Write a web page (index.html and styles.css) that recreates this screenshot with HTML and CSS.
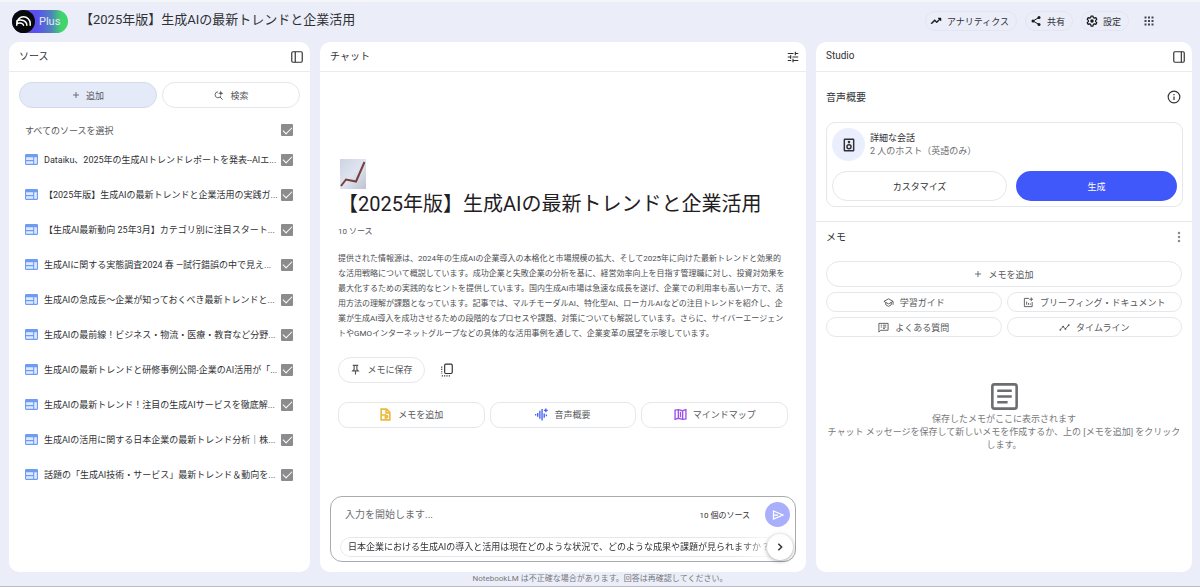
FILE: index.html
```html
<!DOCTYPE html>
<html lang="ja">
<head>
    <meta charset="UTF-8">
    <meta name="viewport" content="width=device-width, initial-scale=1.0">
    <title>NotebookLM</title>
    <link rel="stylesheet" href="styles.css">
</head>
<body>
    <!-- Shared icons -->
    <svg class="icon-defs" aria-hidden="true">
        <symbol id="plus" viewBox="0 0 24 24"><path d="M12 3v18M3 12h18" fill="none" stroke="currentColor" stroke-width="2.500"/></symbol>
        <symbol id="web" viewBox="0 0 24 20"><rect width="24" height="20" rx="2" fill="#6f9cf3"/><path d="M2 6h13v5H2zM2 13h13v5H2zM17 6h5v12h-5z" fill="#dfe9fe"/></symbol>
    </svg>

    <header class="topbar">
        <div class="brand">
            <svg class="logo" viewBox="0 0 24 24" fill="none" stroke="#fff" stroke-width="1.6" stroke-linecap="round">
                <circle cx="12" cy="12" r="12" fill="#08090b" stroke="none"/>
                <path d="M5 16v-2a7 7 0 0 1 14 0v2M5 11.500c4-2.500 10.500-.5 10.500 4.500M5 14.200c3.500-1.600 7-.2 7 1.800"/>
            </svg>
            <span>Plus</span>
        </div>
        <h1>【2025年版】生成AIの最新トレンドと企業活用</h1>
        <nav class="top-actions">
            <button class="top-btn">
                <svg viewBox="0 0 24 24"><path fill="currentColor" stroke="currentColor" d="M16 6l2.290 2.290-4.880 4.880-4-4L2 16.590 3.410 18l6-6 4 4 6.300-6.290L22 12V6z"/></svg>
                アナリティクス
            </button>
            <button class="top-btn">
                <svg viewBox="0 0 24 24"><path fill="none" stroke="currentColor" stroke-width="2" d="M18 5L6 12l12 7"/><g fill="currentColor"><circle cx="18" cy="5" r="3"/><circle cx="6" cy="12" r="3"/><circle cx="18" cy="19" r="3"/></g></svg>
                共有
            </button>
            <button class="top-btn">
                <svg viewBox="0 0 24 24"><path fill="none" stroke="currentColor" stroke-width="2.500" stroke-linejoin="round" d="M10 2h4l.6 3 2 1.200 3-1 2 3.500-2.300 2v2.600l2.300 2-2 3.500-3-1-2 1.200-.6 3h-4l-.6-3-2-1.200-3 1-2-3.500 2.300-2v-2.600l-2.300-2 2-3.500 3 1 2-1.200z"/><circle cx="12" cy="12" r="3.500" fill="currentColor"/></svg>
                設定
            </button>
            <button class="apps-btn" aria-label="アプリ">
                <svg viewBox="0 0 24 24" fill="currentColor"><path d="M3 3h4v4H3zM10 3h4v4h-4zM17 3h4v4h-4zM3 10h4v4H3zM10 10h4v4h-4zM17 10h4v4h-4zM3 17h4v4H3zM10 17h4v4h-4zM17 17h4v4h-4z"/></svg>
            </button>
        </nav>
    </header>

    <main class="panels">
        <section class="panel">
            <div class="panel-header">
                <h2>ソース</h2>
                <button class="icon-btn" aria-label="ソースを閉じる">
                    <svg viewBox="0 0 24 24" fill="none" stroke="currentColor" stroke-width="2"><rect x="3" y="3" width="18" height="18" rx="2"/><path d="M9 3v18"/></svg>
                </button>
            </div>
            <div class="source-actions">
                <button class="pill pill-tinted"><svg class="small"><use href="#plus"/></svg>追加</button>
                <button class="pill">
                    <svg viewBox="0 0 24 24" fill="none" stroke="currentColor" stroke-width="2"><path d="M11 4a6.500 6.500 0 1 0 6 9M15 15l6 6"/><path fill="currentColor" stroke="none" d="M17 1l1.500 4.500L23 7l-4.500 1.500L17 13l-1.500-4.500L11 7l4.500-1.500z"/></svg>
                    検索
                </button>
            </div>
            <div class="source-list">
                <label class="select-all"><span>すべてのソースを選択</span><input type="checkbox" checked></label>
                <label class="source"><svg><use href="#web"/></svg><span>Dataiku、2025年の生成AIトレンドレポートを発表--AIエ...</span><input type="checkbox" checked></label>
                <label class="source"><svg><use href="#web"/></svg><span>【2025年版】生成AIの最新トレンドと企業活用の実践ガ...</span><input type="checkbox" checked></label>
                <label class="source"><svg><use href="#web"/></svg><span>【生成AI最新動向 25年3月】カテゴリ別に注目スタート...</span><input type="checkbox" checked></label>
                <label class="source"><svg><use href="#web"/></svg><span>生成AIに関する実態調査2024 春 ―試行錯誤の中で見え...</span><input type="checkbox" checked></label>
                <label class="source"><svg><use href="#web"/></svg><span>生成AIの急成長～企業が知っておくべき最新トレンドと...</span><input type="checkbox" checked></label>
                <label class="source"><svg><use href="#web"/></svg><span>生成AIの最前線！ビジネス・物流・医療・教育など分野...</span><input type="checkbox" checked></label>
                <label class="source"><svg><use href="#web"/></svg><span>生成AIの最新トレンドと研修事例公開-企業のAI活用が「...</span><input type="checkbox" checked></label>
                <label class="source"><svg><use href="#web"/></svg><span>生成AIの最新トレンド！注目の生成AIサービスを徹底解...</span><input type="checkbox" checked></label>
                <label class="source"><svg><use href="#web"/></svg><span>生成AIの活用に関する日本企業の最新トレンド分析｜株...</span><input type="checkbox" checked></label>
                <label class="source"><svg><use href="#web"/></svg><span>話題の「生成AI技術・サービス」最新トレンド＆動向を...</span><input type="checkbox" checked></label>
            </div>
        </section>

        <section class="panel">
            <div class="panel-header">
                <h2>チャット</h2>
                <button class="icon-btn" aria-label="チャットの設定">
                    <svg viewBox="0 0 24 24"><path fill="currentColor" d="M3 17v2h6v-2H3zM3 5v2h10V5H3zm10 16v-2h8v-2h-8v-2h-2v6h2zM7 9v2H3v2h4v2h2V9H7zm14 4v-2H11v2h10zm-6-4h2V7h4V5h-4V3h-2v6z"/></svg>
                </button>
            </div>
            <div class="overview">
                <svg class="emoji" viewBox="0 0 26 30">
                    <defs><linearGradient id="paper" x1="0" y1="0" x2="1" y2="1"><stop offset="0" stop-color="#ccd4e2"/><stop offset=".5" stop-color="#dfe4ef"/><stop offset="1" stop-color="#bdc3cf"/></linearGradient></defs>
                    <rect width="26" height="30" fill="url(#paper)"/>
                    <path d="M1 27l5-6.500 10 2L24.500 3" fill="none" stroke="#73423f" stroke-width="2"/>
                </svg>
                <h2 class="overview-title">【2025年版】生成AIの最新トレンドと企業活用</h2>
                <p class="source-count">10 ソース</p>
                <p class="summary">提供された情報源は、2024年の生成AIの企業導入の本格化と市場規模の拡大、そして2025年に向けた最新トレンドと効果的な活用戦略について概説しています。成功企業と失敗企業の分析を基に、経営効率向上を目指す管理職に対し、投資対効果を最大化するための実践的なヒントを提供しています。国内生成AI市場は急速な成長を遂げ、企業での利用率も高い一方で、活用方法の理解が課題となっています。記事では、マルチモーダルAI、特化型AI、ローカルAIなどの注目トレンドを紹介し、企業が生成AI導入を成功させるための段階的なプロセスや課題、対策についても解説しています。さらに、サイバーエージェントやGMOインターネットグループなどの具体的な活用事例を通して、企業変革の展望を示唆しています。</p>
                <div class="save-row">
                    <button class="pill save-btn">
                        <svg viewBox="0 0 24 24" fill="none" stroke="currentColor" stroke-width="2.500"><path d="M6 3h12M9 3v9l-3 3h12l-3-3V3M12 15v8"/></svg>
                        メモに保存
                    </button>
                    <button class="icon-btn" aria-label="コピー">
                        <svg viewBox="0 0 24 24" fill="none" stroke="currentColor" stroke-width="2"><rect x="8" y="2" width="13" height="16" rx="2"/><path d="M3 6v13M3 22h15" stroke-dasharray="2 2"/></svg>
                    </button>
                </div>
                <div class="chips">
                    <button class="pill">
                        <svg viewBox="0 0 24 24" fill="none" stroke="#edb83f" stroke-width="3"><path d="M4 2h10l6 6v14H4zM13 2v7h7M4 13h8v9"/><circle cx="14" cy="16" r="2"/></svg>
                        メモを追加
                    </button>
                    <button class="pill">
                        <svg viewBox="0 0 24 24" fill="none" stroke="#4361ee" stroke-width="2.500"><path d="M1 11v3M5 9v7M9 5v15M13 2v21M17 10v8M21 12v3M20 1v7M16.500 4.500h7"/></svg>
                        音声概要
                    </button>
                    <button class="pill">
                        <svg viewBox="0 0 24 24" fill="none" stroke="#9b51e8" stroke-width="2.500"><path d="M2 4l6-1 8 2 6-2v17l-6 1-8-2-6 2zM8 3v16M16 5v16M12 7v10"/></svg>
                        マインドマップ
                    </button>
                </div>
            </div>
            <form class="composer">
                <div class="composer-row">
                    <input type="text" aria-label="質問" placeholder="入力を開始します...">
                    <span class="composer-count">10 個のソース</span>
                    <button type="button" class="send-btn" aria-label="送信">
                        <svg viewBox="0 0 24 24" fill="none" stroke="#fff" stroke-width="2.500"><path d="M3 4l19 8-19 8zM3 12h9"/></svg>
                    </button>
                </div>
                <div class="suggestions">
                    <button type="button" class="suggestion">日本企業における生成AIの導入と活用は現在どのような状況で、どのような成果や課題が見られますか？</button>
                    <button type="button" class="next-btn" aria-label="次へ">
                        <svg viewBox="0 0 24 24" fill="none" stroke="currentColor" stroke-width="3.500"><path d="M8 4l8 8-8 8"/></svg>
                    </button>
                </div>
            </form>
        </section>

        <section class="panel">
            <div class="panel-header">
                <h2>Studio</h2>
                <button class="icon-btn" aria-label="Studioを閉じる">
                    <svg viewBox="0 0 24 24" fill="none" stroke="currentColor" stroke-width="2"><rect x="3" y="3" width="18" height="18" rx="2"/><path d="M16 3v18"/></svg>
                </button>
            </div>
            <div class="audio">
                <div class="section-title">
                    <h3>音声概要</h3>
                    <button class="icon-btn" aria-label="情報">
                        <svg viewBox="0 0 24 24" fill="none" stroke="currentColor" stroke-width="2"><circle cx="12" cy="12" r="10"/><path d="M12 11v6M12 7v2"/></svg>
                    </button>
                </div>
                <div class="audio-card">
                    <div class="audio-info">
                        <span class="speaker">
                            <svg viewBox="0 0 24 24" fill="none" stroke="currentColor" stroke-width="2.500"><rect x="4" y="2" width="16" height="20" rx="1"/><circle cx="12" cy="15" r="3.500"/><circle cx="12" cy="7" r="1"/></svg>
                        </span>
                        <div>
                            <p class="audio-name">詳細な会話</p>
                            <p class="audio-hosts">2 人のホスト（英語のみ）</p>
                        </div>
                    </div>
                    <div class="audio-actions">
                        <button class="pill">カスタマイズ</button>
                        <button class="pill pill-primary">生成</button>
                    </div>
                </div>
            </div>
            <div class="notes">
                <div class="section-title">
                    <h3>メモ</h3>
                    <button class="icon-btn more" aria-label="その他">
                        <svg viewBox="0 0 24 24" fill="currentColor"><circle cx="12" cy="4" r="2.500"/><circle cx="12" cy="12" r="2.500"/><circle cx="12" cy="20" r="2.500"/></svg>
                    </button>
                </div>
                <div class="note-buttons">
                    <button class="pill add-note"><svg class="small"><use href="#plus"/></svg>メモを追加</button>
                    <button class="pill">
                        <svg viewBox="0 0 24 24" fill="none" stroke="currentColor" stroke-width="2"><path d="M12 4l10 5.500-10 5.500L2 9.500zM6 12v5l6 3.500 6-3.500v-5M22 10v7"/></svg>
                        学習ガイド
                    </button>
                    <button class="pill">
                        <svg viewBox="0 0 24 24" fill="none" stroke="currentColor" stroke-width="2"><path d="M13 3H3v18h17V11M8 10v7M12 13v4M16 14v3M18 1v8M14 5h8"/></svg>
                        ブリーフィング・ドキュメント
                    </button>
                    <button class="pill">
                        <svg viewBox="0 0 24 24" fill="none" stroke="currentColor" stroke-width="2"><path d="M2 3h20v15H6l-4 4zM6 7h3M11 7h7M6 11h3M11 11h7M11 14h4"/></svg>
                        よくある質問
                    </button>
                    <button class="pill">
                        <svg viewBox="0 0 24 24" fill="none" stroke="currentColor" stroke-width="2"><path d="M2 17l7-7 5 5 8-9"/><g fill="currentColor" stroke="none"><circle cx="3" cy="17" r="2"/><circle cx="9" cy="10" r="2"/><circle cx="14" cy="15" r="2"/><circle cx="21" cy="7" r="2"/></g></svg>
                        タイムライン
                    </button>
                </div>
                <div class="empty">
                    <svg viewBox="0 0 26 26" fill="none" stroke="currentColor" stroke-width="2.500"><rect x="1.300" y="1.300" width="23.400" height="23.400" rx="2"/><path d="M6 7.500h14M6 13h14M6 18.500h10"/></svg>
                    <p>保存したメモがここに表示されます</p>
                    <p>チャット メッセージを保存して新しいメモを作成するか、上の [メモを追加] をクリックします。</p>
                </div>
            </div>
        </section>
    </main>

    <footer class="footer">NotebookLM は不正確な場合があります。回答は再確認してください。</footer>
</body>
</html>
```

FILE: styles.css
```css
* {
    box-sizing: border-box;
}
body {
    margin: 0;
    min-height: 100vh;
    display: flex;
    flex-direction: column;
    background-color: #ebeef9;
    border-top: 2px solid #f4f5f6;
    border-bottom: 1px solid #b9bbc0;
    color: #303134;
    font-family: Roboto, "Noto Sans CJK JP", sans-serif;
    font-size: 9px;
}
h1, h2, h3, p {
    margin: 0;
    font-weight: 400;
}
button, input {
    font: inherit;
    color: inherit;
}
button {
    display: flex;
    align-items: center;
    justify-content: center;
    padding: 0;
    border: none;
    background: none;
    cursor: pointer;
    white-space: nowrap;
}
svg {
    width: 12px;
    height: 12px;
    flex-shrink: 0;
}
.icon-defs {
    position: absolute;
    width: 0;
    height: 0;
}

/* Top bar */
.topbar {
    display: flex;
    align-items: center;
    height: 40px;
    padding: 0 45px 2px 12px;
}
.brand {
    display: flex;
    align-items: center;
    gap: 4px;
    width: 56px;
    height: 23px;
    margin-right: 12px;
    border-radius: 12px;
    background: linear-gradient(90deg, #5b50ee 45%, #4e83ba 70%, #3fd56c 88%);
    color: #e4e9fb;
    font-size: 11px;
}
.brand .logo {
    width: 23px;
    height: 23px;
}
.topbar h1 {
    font-size: 13px;
    line-height: 18px;
    padding-bottom: 2px;
}
.top-actions {
    display: flex;
    align-items: center;
    gap: 8px;
    margin-left: auto;
}
.top-btn {
    gap: 5px;
    height: 20px;
    padding: 0 7px 0 4px;
    border: 1px solid #e3e6f2;
    border-radius: 10px;
}
.top-btn svg {
    color: #18191b;
}
.apps-btn {
    margin-left: 6px;
    color: #444649;
}

/* Panels */
.panels {
    flex: 1;
    display: grid;
    grid-template-columns: 301fr 486fr 376fr;
    gap: 10px;
    padding: 0 8px 0 9px;
}
.panel {
    display: flex;
    flex-direction: column;
    min-width: 0;
    border-radius: 10px;
    background-color: white;
}
.panel-header {
    display: flex;
    align-items: center;
    justify-content: space-between;
    height: 30px;
    padding: 0 6px 0 10px;
    border-bottom: 1px solid #eaebed;
}
.panel-header h2,
.section-title h3 {
    padding-bottom: 2px;
    font-size: 10px;
}
.icon-btn svg {
    width: 14px;
    height: 14px;
}
.pill {
    gap: 6px;
    height: 26px;
    border: 1px solid #e6e7ea;
    border-radius: 13px;
    background-color: white;
    color: #55575b;
}
.pill svg {
    width: 11px;
    height: 11px;
}
.pill .small {
    width: 8px;
    height: 8px;
}
.pill-tinted {
    background-color: #e5eaf9;
    border-color: #d4daec;
}

/* Sources */
.source-actions {
    display: grid;
    grid-template-columns: 1fr 1fr;
    gap: 5px;
    padding: 10px;
}
.source-list {
    padding: 0 17px 0 16px;
}
.select-all,
.source {
    display: flex;
    align-items: center;
    gap: 6px;
    height: 35px;
}
.select-all {
    height: 24px;
    color: #55575b;
}
.select-all span,
.source span {
    flex: 1;
    min-width: 0;
    white-space: nowrap;
}
.source svg {
    width: 13px;
    height: 11px;
}
.source-list input {
    appearance: none;
    display: grid;
    place-content: center;
    width: 12px;
    height: 12px;
    margin: 0;
    border-radius: 1px;
    background-color: #8c8c8e;
}
.source-list input:checked::before {
    content: "";
    width: 8px;
    height: 4px;
    border-left: 1px solid white;
    border-bottom: 1px solid white;
    transform: translateY(-1px) rotate(-45deg);
}

/* Chat */
.overview {
    flex: 1;
    display: flex;
    flex-direction: column;
    justify-content: center;
    padding: 18px 18px 0;
}
.emoji {
    width: 26px;
    height: 30px;
    margin-left: 2px;
}
.overview-title {
    font-size: 20px;
    line-height: 30px;
    color: #1f2023;
    white-space: nowrap;
}
.source-count {
    margin-top: 5px;
    font-size: 8px;
    line-height: 15px;
    color: #55575b;
}
.summary {
    margin-top: 12px;
    font-size: 8px;
    line-height: 15px;
    color: #4c4e52;
}
.save-row {
    display: flex;
    align-items: center;
    gap: 15px;
    margin: 16px 0 19px;
}
.save-btn {
    width: 87px;
}
.chips {
    display: grid;
    grid-template-columns: repeat(3, 1fr);
    gap: 5px;
}
.chips .pill {
    border-radius: 10px;
}
.chips svg {
    width: 13px;
    height: 13px;
}
.composer {
    margin: 0 10px 10px;
    padding: 5px 5px 1px 9px;
    border: 1px solid #a9abae;
    border-radius: 12px;
}
.composer-row {
    display: flex;
    align-items: center;
}
.composer-row input {
    flex: 1;
    min-width: 0;
    padding: 0 5px;
    border: none;
    outline: none;
    font-size: 10px;
}
.composer-row input::placeholder {
    color: #6d6f73;
}
.composer-count {
    margin-right: 15px;
    font-size: 8px;
}
.send-btn {
    width: 25px;
    height: 25px;
    border-radius: 50%;
    background-color: #a9affb;
}
.suggestions {
    position: relative;
    display: flex;
    align-items: center;
    margin-top: 6px;
    height: 27px;
}
.suggestion {
    flex: 1;
    min-width: 0;
    justify-content: flex-start;
    height: 20px;
    padding: 0 7px;
    border: 1px solid #e6e7ea;
    border-radius: 10px;
    overflow: hidden;
    mask-image: linear-gradient(90deg, black 88%, transparent 98%);
}
/* Scroll button lies over the faded end of the suggestion */
.next-btn {
    position: absolute;
    right: -3px;
    width: 26px;
    height: 26px;
    border-radius: 50%;
    background-color: white;
    box-shadow: 0 1px 4px rgba(0, 0, 0, 0.35);
}
.next-btn svg {
    width: 10px;
    height: 10px;
}

/* Studio */
.section-title {
    display: flex;
    align-items: center;
    justify-content: space-between;
    height: 30px;
}
.audio {
    padding: 10px 9px 14px 10px;
    border-bottom: 1px solid #e6e7ea;
}
.section-title .icon-btn {
    margin-right: 2px;
}
.audio-card {
    margin-top: 10px;
    padding: 5px;
    border: 1px solid #e6e7ea;
    border-radius: 9px;
}
.audio-info {
    display: flex;
    align-items: center;
    gap: 5px;
    line-height: 13px;
}
.speaker {
    display: grid;
    place-content: center;
    width: 33px;
    height: 33px;
    border-radius: 50%;
    background-color: #ebeefc;
}
.speaker svg {
    width: 14px;
    height: 14px;
}
.audio-hosts {
    color: #6d6f73;
}
.audio-actions {
    display: grid;
    grid-template-columns: 175fr 161fr;
    gap: 9px;
    margin-top: 10px;
}
.audio-actions .pill {
    height: 30px;
    border-radius: 15px;
    color: #303134;
}
.audio-actions .pill-primary {
    border: none;
    background-color: #4058fa;
    color: white;
}
.notes {
    padding: 0 10px;
}
.more {
    color: #8c8c8e;
}
.section-title .more {
    margin-right: -3px;
}
.more svg {
    width: 12px;
    height: 12px;
}
.note-buttons {
    display: grid;
    grid-template-columns: 1fr 1fr;
    gap: 5px;
    margin-top: 9px;
}
.note-buttons .pill {
    height: 20px;
}
.note-buttons .add-note {
    grid-column: 1 / -1;
    height: 26px;
}
.empty {
    margin-top: 46px;
    color: #77797c;
    line-height: 13px;
    text-align: center;
}
.empty svg {
    display: block;
    width: 27px;
    height: 27px;
    margin: 0 auto 3px;
    color: #6c6d70;
}

.footer {
    height: 14px;
    font-size: 8px;
    line-height: 14px;
    text-align: center;
    color: #77797c;
}
```
